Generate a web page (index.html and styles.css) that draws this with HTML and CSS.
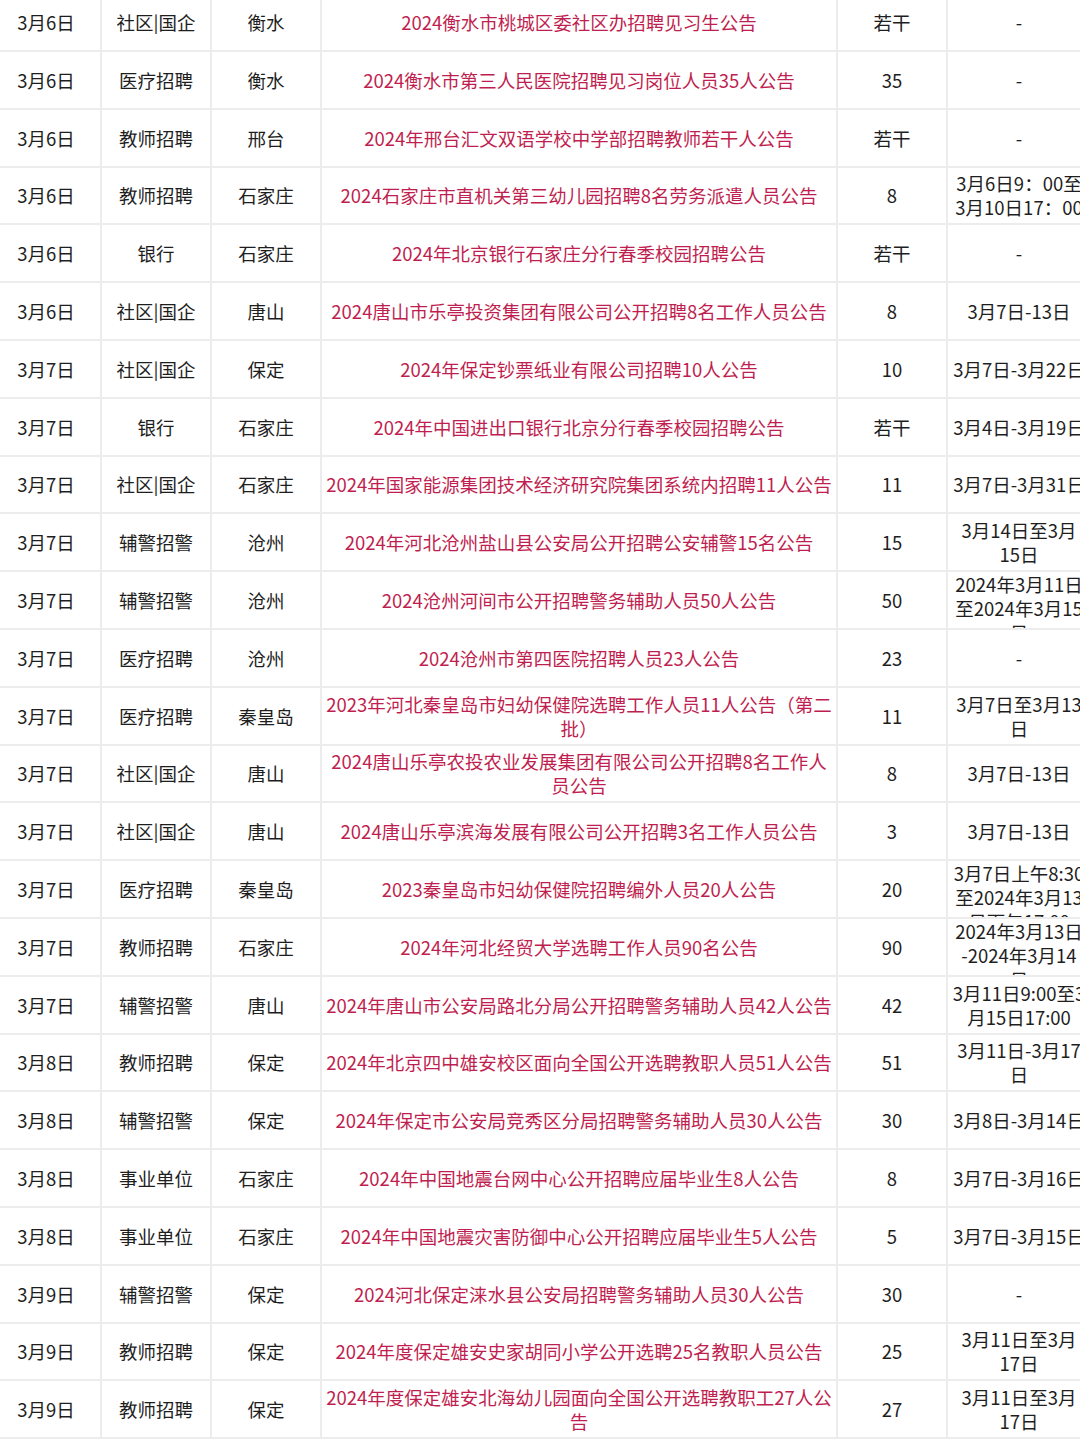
FILE: index.html
```html
<!DOCTYPE html>
<html lang="zh-CN">
<head>
<meta charset="utf-8">
<title>河北招聘信息汇总</title>
<link rel="stylesheet" href="styles.css">
</head>
<body>
<div class="page">
<table class="jobs">
<colgroup>
<col class="w-date"><col class="w-type"><col class="w-city"><col class="w-title"><col class="w-num"><col class="w-time">
</colgroup>
<tbody>
<tr><td><div class="c"><div class="t">3月6日</div></div></td><td><div class="c"><div class="t">社区|国企</div></div></td><td><div class="c"><div class="t">衡水</div></div></td><td><div class="c"><div class="t link">2024衡水市桃城区委社区办招聘见习生公告</div></div></td><td><div class="c"><div class="t">若干</div></div></td><td><div class="c"><div class="t">-</div></div></td></tr>
<tr><td><div class="c"><div class="t">3月6日</div></div></td><td><div class="c"><div class="t">医疗招聘</div></div></td><td><div class="c"><div class="t">衡水</div></div></td><td><div class="c"><div class="t link">2024衡水市第三人民医院招聘见习岗位人员35人公告</div></div></td><td><div class="c"><div class="t">35</div></div></td><td><div class="c"><div class="t">-</div></div></td></tr>
<tr><td><div class="c"><div class="t">3月6日</div></div></td><td><div class="c"><div class="t">教师招聘</div></div></td><td><div class="c"><div class="t">邢台</div></div></td><td><div class="c"><div class="t link">2024年邢台汇文双语学校中学部招聘教师若干人公告</div></div></td><td><div class="c"><div class="t">若干</div></div></td><td><div class="c"><div class="t">-</div></div></td></tr>
<tr><td><div class="c"><div class="t">3月6日</div></div></td><td><div class="c"><div class="t">教师招聘</div></div></td><td><div class="c"><div class="t">石家庄</div></div></td><td><div class="c"><div class="t link">2024石家庄市直机关第三幼儿园招聘8名劳务派遣人员公告</div></div></td><td><div class="c"><div class="t">8</div></div></td><td><div class="c"><div class="t">3月6日9：00至<br>3月10日17：00</div></div></td></tr>
<tr><td><div class="c"><div class="t">3月6日</div></div></td><td><div class="c"><div class="t">银行</div></div></td><td><div class="c"><div class="t">石家庄</div></div></td><td><div class="c"><div class="t link">2024年北京银行石家庄分行春季校园招聘公告</div></div></td><td><div class="c"><div class="t">若干</div></div></td><td><div class="c"><div class="t">-</div></div></td></tr>
<tr><td><div class="c"><div class="t">3月6日</div></div></td><td><div class="c"><div class="t">社区|国企</div></div></td><td><div class="c"><div class="t">唐山</div></div></td><td><div class="c"><div class="t link">2024唐山市乐亭投资集团有限公司公开招聘8名工作人员公告</div></div></td><td><div class="c"><div class="t">8</div></div></td><td><div class="c"><div class="t">3月7日-13日</div></div></td></tr>
<tr><td><div class="c"><div class="t">3月7日</div></div></td><td><div class="c"><div class="t">社区|国企</div></div></td><td><div class="c"><div class="t">保定</div></div></td><td><div class="c"><div class="t link">2024年保定钞票纸业有限公司招聘10人公告</div></div></td><td><div class="c"><div class="t">10</div></div></td><td><div class="c"><div class="t">3月7日-3月22日</div></div></td></tr>
<tr><td><div class="c"><div class="t">3月7日</div></div></td><td><div class="c"><div class="t">银行</div></div></td><td><div class="c"><div class="t">石家庄</div></div></td><td><div class="c"><div class="t link">2024年中国进出口银行北京分行春季校园招聘公告</div></div></td><td><div class="c"><div class="t">若干</div></div></td><td><div class="c"><div class="t">3月4日-3月19日</div></div></td></tr>
<tr><td><div class="c"><div class="t">3月7日</div></div></td><td><div class="c"><div class="t">社区|国企</div></div></td><td><div class="c"><div class="t">石家庄</div></div></td><td><div class="c"><div class="t link">2024年国家能源集团技术经济研究院集团系统内招聘11人公告</div></div></td><td><div class="c"><div class="t">11</div></div></td><td><div class="c"><div class="t">3月7日-3月31日</div></div></td></tr>
<tr><td><div class="c"><div class="t">3月7日</div></div></td><td><div class="c"><div class="t">辅警招警</div></div></td><td><div class="c"><div class="t">沧州</div></div></td><td><div class="c"><div class="t link">2024年河北沧州盐山县公安局公开招聘公安辅警15名公告</div></div></td><td><div class="c"><div class="t">15</div></div></td><td><div class="c"><div class="t">3月14日至3月<br>15日</div></div></td></tr>
<tr><td><div class="c"><div class="t">3月7日</div></div></td><td><div class="c"><div class="t">辅警招警</div></div></td><td><div class="c"><div class="t">沧州</div></div></td><td><div class="c"><div class="t link">2024沧州河间市公开招聘警务辅助人员50人公告</div></div></td><td><div class="c"><div class="t">50</div></div></td><td><div class="c"><div class="t">2024年3月11日<br>至2024年3月15<br>日</div></div></td></tr>
<tr><td><div class="c"><div class="t">3月7日</div></div></td><td><div class="c"><div class="t">医疗招聘</div></div></td><td><div class="c"><div class="t">沧州</div></div></td><td><div class="c"><div class="t link">2024沧州市第四医院招聘人员23人公告</div></div></td><td><div class="c"><div class="t">23</div></div></td><td><div class="c"><div class="t">-</div></div></td></tr>
<tr><td><div class="c"><div class="t">3月7日</div></div></td><td><div class="c"><div class="t">医疗招聘</div></div></td><td><div class="c"><div class="t">秦皇岛</div></div></td><td><div class="c"><div class="t link">2023年河北秦皇岛市妇幼保健院选聘工作人员11人公告（第二<br>批）</div></div></td><td><div class="c"><div class="t">11</div></div></td><td><div class="c"><div class="t">3月7日至3月13<br>日</div></div></td></tr>
<tr><td><div class="c"><div class="t">3月7日</div></div></td><td><div class="c"><div class="t">社区|国企</div></div></td><td><div class="c"><div class="t">唐山</div></div></td><td><div class="c"><div class="t link">2024唐山乐亭农投农业发展集团有限公司公开招聘8名工作人<br>员公告</div></div></td><td><div class="c"><div class="t">8</div></div></td><td><div class="c"><div class="t">3月7日-13日</div></div></td></tr>
<tr><td><div class="c"><div class="t">3月7日</div></div></td><td><div class="c"><div class="t">社区|国企</div></div></td><td><div class="c"><div class="t">唐山</div></div></td><td><div class="c"><div class="t link">2024唐山乐亭滨海发展有限公司公开招聘3名工作人员公告</div></div></td><td><div class="c"><div class="t">3</div></div></td><td><div class="c"><div class="t">3月7日-13日</div></div></td></tr>
<tr><td><div class="c"><div class="t">3月7日</div></div></td><td><div class="c"><div class="t">医疗招聘</div></div></td><td><div class="c"><div class="t">秦皇岛</div></div></td><td><div class="c"><div class="t link">2023秦皇岛市妇幼保健院招聘编外人员20人公告</div></div></td><td><div class="c"><div class="t">20</div></div></td><td><div class="c"><div class="t">3月7日上午8:30<br>至2024年3月13<br>日下午17:00</div></div></td></tr>
<tr><td><div class="c"><div class="t">3月7日</div></div></td><td><div class="c"><div class="t">教师招聘</div></div></td><td><div class="c"><div class="t">石家庄</div></div></td><td><div class="c"><div class="t link">2024年河北经贸大学选聘工作人员90名公告</div></div></td><td><div class="c"><div class="t">90</div></div></td><td><div class="c"><div class="t">2024年3月13日<br>-2024年3月14<br>日</div></div></td></tr>
<tr><td><div class="c"><div class="t">3月7日</div></div></td><td><div class="c"><div class="t">辅警招警</div></div></td><td><div class="c"><div class="t">唐山</div></div></td><td><div class="c"><div class="t link">2024年唐山市公安局路北分局公开招聘警务辅助人员42人公告</div></div></td><td><div class="c"><div class="t">42</div></div></td><td><div class="c"><div class="t">3月11日9:00至3<br>月15日17:00</div></div></td></tr>
<tr><td><div class="c"><div class="t">3月8日</div></div></td><td><div class="c"><div class="t">教师招聘</div></div></td><td><div class="c"><div class="t">保定</div></div></td><td><div class="c"><div class="t link">2024年北京四中雄安校区面向全国公开选聘教职人员51人公告</div></div></td><td><div class="c"><div class="t">51</div></div></td><td><div class="c"><div class="t">3月11日-3月17<br>日</div></div></td></tr>
<tr><td><div class="c"><div class="t">3月8日</div></div></td><td><div class="c"><div class="t">辅警招警</div></div></td><td><div class="c"><div class="t">保定</div></div></td><td><div class="c"><div class="t link">2024年保定市公安局竞秀区分局招聘警务辅助人员30人公告</div></div></td><td><div class="c"><div class="t">30</div></div></td><td><div class="c"><div class="t">3月8日-3月14日</div></div></td></tr>
<tr><td><div class="c"><div class="t">3月8日</div></div></td><td><div class="c"><div class="t">事业单位</div></div></td><td><div class="c"><div class="t">石家庄</div></div></td><td><div class="c"><div class="t link">2024年中国地震台网中心公开招聘应届毕业生8人公告</div></div></td><td><div class="c"><div class="t">8</div></div></td><td><div class="c"><div class="t">3月7日-3月16日</div></div></td></tr>
<tr><td><div class="c"><div class="t">3月8日</div></div></td><td><div class="c"><div class="t">事业单位</div></div></td><td><div class="c"><div class="t">石家庄</div></div></td><td><div class="c"><div class="t link">2024年中国地震灾害防御中心公开招聘应届毕业生5人公告</div></div></td><td><div class="c"><div class="t">5</div></div></td><td><div class="c"><div class="t">3月7日-3月15日</div></div></td></tr>
<tr><td><div class="c"><div class="t">3月9日</div></div></td><td><div class="c"><div class="t">辅警招警</div></div></td><td><div class="c"><div class="t">保定</div></div></td><td><div class="c"><div class="t link">2024河北保定涞水县公安局招聘警务辅助人员30人公告</div></div></td><td><div class="c"><div class="t">30</div></div></td><td><div class="c"><div class="t">-</div></div></td></tr>
<tr><td><div class="c"><div class="t">3月9日</div></div></td><td><div class="c"><div class="t">教师招聘</div></div></td><td><div class="c"><div class="t">保定</div></div></td><td><div class="c"><div class="t link">2024年度保定雄安史家胡同小学公开选聘25名教职人员公告</div></div></td><td><div class="c"><div class="t">25</div></div></td><td><div class="c"><div class="t">3月11日至3月<br>17日</div></div></td></tr>
<tr><td><div class="c"><div class="t">3月9日</div></div></td><td><div class="c"><div class="t">教师招聘</div></div></td><td><div class="c"><div class="t">保定</div></div></td><td><div class="c"><div class="t link">2024年度保定雄安北海幼儿园面向全国公开选聘教职工27人公<br>告</div></div></td><td><div class="c"><div class="t">27</div></div></td><td><div class="c"><div class="t">3月11日至3月<br>17日</div></div></td></tr>
</tbody>
</table>
</div>
</body>
</html>
```

FILE: styles.css
```css
html, body {
  margin: 0;
  padding: 0;
  background: #ffffff;
  overflow: hidden;
}

.page {
  width: 1080px;
  height: 1440px;
  overflow: hidden;
}

.jobs {
  margin: -5.8px 0 0 -8px;
  border-collapse: separate;
  border-spacing: 0;
  table-layout: fixed;
  width: 1100px;
  font-family: "Noto Sans CJK SC", "Noto Sans", sans-serif;
  font-size: 18.5px;
  color: #1e1e1e;
}

.w-date, .w-type, .w-city, .w-num { width: 110px; }
.w-title { width: 516px; }
.w-time { width: 144px; }

.jobs td {
  padding: 0;
  border-right: 2px solid #ececec;
  border-bottom: 2px solid #ececec;
  vertical-align: middle;
}

.c {
  height: 55.8px;
  display: flex;
  align-items: center;
  justify-content: center;
  padding: 0 6px;
}

.t {
  flex-shrink: 0;
  max-height: 55.8px;
  overflow: hidden;
  line-height: 24px;
  white-space: nowrap;
  text-align: center;
}

.link {
  color: #bf1f50;
}
```
